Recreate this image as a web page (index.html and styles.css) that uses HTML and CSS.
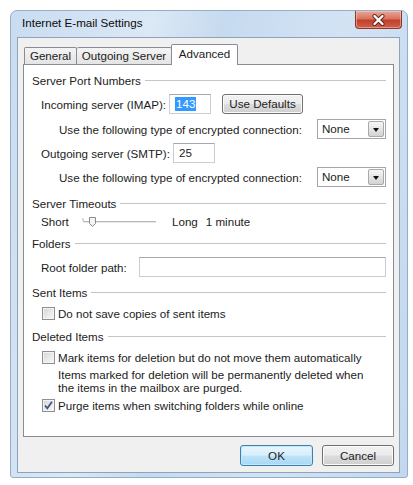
FILE: index.html
```
<!DOCTYPE html>
<html lang="en">
<head>
    <meta charset="UTF-8">
    <title>Internet E-mail Settings</title>
    <link rel="stylesheet" href="styles.css">
</head>
<body>
    <div class="window">
        <div class="titlebar">
            <span class="title">Internet E-mail Settings</span>
            <div class="close">
                <svg width="15" height="12" viewBox="0 0 15 12">
                    <path d="M3.5 2 L11.5 10 M11.5 2 L3.5 10" stroke="#5b2118" stroke-width="4" stroke-linecap="round"/>
                    <path d="M3.5 2 L11.5 10 M11.5 2 L3.5 10" stroke="#ffffff" stroke-width="2.4" stroke-linecap="round"/>
                </svg>
            </div>
        </div>

        <div class="client">
            <div class="tabs">
                <div class="tab t-general">General</div>
                <div class="tab t-outgoing">Outgoing Server</div>
                <div class="tab t-advanced active">Advanced</div>
            </div>

            <div class="panel">
                <div class="group">Server Port Numbers</div>
                <div class="row r-incoming">
                    <span class="lbl w-incoming">Incoming server (IMAP):</span>
                    <div class="field port"><span class="selected">143</span></div>
                    <div class="btn defaults">Use Defaults</div>
                </div>
                <div class="row sub r-enc1">
                    <span class="lbl w-enc">Use the following type of encrypted connection:</span>
                    <div class="combo">None<span class="drop"><span class="arrow"></span></span></div>
                </div>
                <div class="row r-outgoing">
                    <span class="lbl w-outgoing">Outgoing server (SMTP):</span>
                    <div class="field port">25</div>
                </div>
                <div class="row sub r-enc2">
                    <span class="lbl w-enc">Use the following type of encrypted connection:</span>
                    <div class="combo">None<span class="drop"><span class="arrow"></span></span></div>
                </div>

                <div class="group g-timeouts">Server Timeouts</div>
                <div class="row slim r-short">
                    <span class="lbl w-short">Short</span>
                    <svg class="slider" width="75" height="16" viewBox="0 0 75 16">
                        <path d="M1 5 V8" stroke="#b4b4b4" stroke-width="1"/>
                        <path d="M1 8.5 H74" stroke="#b9b9b9" stroke-width="1"/>
                        <path d="M1 9.5 H74" stroke="#e6e6e6" stroke-width="1"/>
                        <path d="M7.5 4.5 H13.5 V10.5 L10.5 13.5 L7.5 10.5 Z" fill="#f4f4f4" stroke="#8a8a8a" stroke-width="1"/>
                    </svg>
                    <span class="long">Long</span>
                    <span class="minute">1 minute</span>
                </div>

                <div class="group g-folders">Folders</div>
                <div class="row r-root">
                    <span class="lbl w-root">Root folder path:</span>
                    <div class="field path"></div>
                </div>

                <div class="group g-sent">Sent Items</div>
                <div class="row slim check r-sent">
                    <span class="box"></span>
                    <span>Do not save copies of sent items</span>
                </div>

                <div class="group g-deleted">Deleted Items</div>
                <div class="row slim check r-mark">
                    <span class="box"></span>
                    <span>Mark items for deletion but do not move them automatically</span>
                </div>
                <p class="note">Items marked for deletion will be permanently deleted when<br>the items in the mailbox are purged.</p>
                <div class="row slim check r-purge">
                    <span class="box">
                        <svg width="11" height="11" viewBox="0 0 11 11">
                            <path d="M2 5.5 L4.3 8.3 L9 1.8" fill="none" stroke="#3f5488" stroke-width="1.8"/>
                        </svg>
                    </span>
                    <span>Purge items when switching folders while online</span>
                </div>
            </div>

            <div class="buttons">
                <div class="btn ok">OK</div>
                <div class="btn cancel">Cancel</div>
            </div>
        </div>
    </div>
</body>
</html>
```

FILE: styles.css
```
body{
    margin: 0;
    padding: 10px 0 0 10px;
    background-color: #ffffff;
    font-family: 'Liberation Sans', Arial, sans-serif;
    font-size: 11.6px;
    color: #1c1c1c;
}

.window{
    box-sizing: border-box;
    width: 398px;
    height: 468px;
    padding: 0 7px 4px 6px;
    border: 1px solid #93aecb;
    border-radius: 7px 7px 3px 3px;
    background: linear-gradient(100deg, #c9dcf0 0%, #dbe8f6 30%, #c6daef 45%, #d3e3f4 70%, #c3d8ee 100%);
}

.titlebar{
    height: 26px;
    display: flex;
    align-items: center;
}

.title{
    padding: 0 0 3px 5px;
    font-size: 11.6px;
    color: #0b0b0b;
}

.close{
    box-sizing: border-box;
    width: 47px;
    height: 18px;
    margin: -8px -2px 0 auto;
    display: flex;
    align-items: center;
    justify-content: center;
    border: 1px solid #8b3628;
    border-top: none;
    border-radius: 0 0 4px 4px;
    background: linear-gradient(#e9a797 0%, #d9735f 45%, #c2402b 55%, #d0604b 100%);
    box-shadow: inset 0 0 0 1px rgba(255, 220, 210, 0.45);
}

.client{
    box-sizing: border-box;
    height: 436px;
    padding: 6px 5px 0 5px;
    border: 1px solid #8ea2ba;
    background-color: #f0f0f0;
}

/* tabs */
.tabs{
    display: flex;
    height: 20px;
    align-items: flex-end;
}

.tab{
    box-sizing: border-box;
    height: 17px;
    line-height: 16px;
    text-align: center;
    border: 1px solid #898c95;
    border-bottom: none;
    border-radius: 2px 2px 0 0;
    background: linear-gradient(#f4f4f4, #e4e4e4);
}

.t-general{
    width: 53px;
    margin-left: 1px;
}

.t-outgoing{
    width: 95px;
    border-left: none;
}

.tab.active{
    position: relative;
    z-index: 1;
    width: 67px;
    height: 21px;
    margin-left: -1px;
    margin-bottom: -1px;
    line-height: 18px;
    background: #ffffff;
}

.panel{
    box-sizing: border-box;
    height: 373px;
    padding: 7px 7px 0 8px;
    border: 1px solid #898c95;
    background-color: #ffffff;
}

.group{
    height: 16px;
    display: flex;
    align-items: center;
    gap: 4px;
}

.group::after{
    content: '';
    flex: 1;
    height: 1px;
    background-color: #c5c5c5;
}

.g-timeouts{ margin-top: 8px; }
.g-folders{ margin-top: 6px; }
.g-sent{ margin-top: 7px; }
.g-deleted{ margin-top: 7px; }

.row{
    display: flex;
    align-items: center;
    height: 20px;
    margin-left: 9px;
}

.row.sub{ margin-left: 27px; }
.row.slim{ height: 16px; }

.r-incoming{ margin-top: 6px; }
.r-enc1{ margin-top: 5px; }
.r-outgoing{ margin-top: 4px; }
.r-enc2{ margin-top: 4px; }
.r-short{ margin-top: 2px; }
.r-root{ margin-top: 6px; }
.r-sent{ margin-top: 5px; }
.r-mark{ margin-top: 5px; }
.r-purge{ margin-top: 3px; }

.lbl{ flex: none; }
.w-incoming{ width: 128px; }
.w-outgoing{ width: 132px; }
.w-enc{ width: 258px; }
.w-root{ width: 98px; }
.w-short{ width: 41px; }

/* inputs */
.field{
    box-sizing: border-box;
    height: 20px;
    padding-left: 5px;
    line-height: 18px;
    border: 1px solid #c9ced6;
    border-top-color: #a3a8b1;
    background-color: #ffffff;
}

.port{ width: 42px; }
.path{ width: 247px; }

.selected{
    display: inline-block;
    padding: 0 1px;
    line-height: 14px;
    color: #ffffff;
    background-color: #3399ff;
}

.combo{
    box-sizing: border-box;
    position: relative;
    width: 69px;
    height: 20px;
    padding-left: 4px;
    line-height: 18px;
    border: 1px solid #a6a6a6;
    background-color: #ffffff;
}

.drop{
    box-sizing: border-box;
    position: absolute;
    top: 1px;
    right: 1px;
    width: 16px;
    height: 16px;
    display: flex;
    align-items: center;
    justify-content: center;
    border: 1px solid #a9a9a9;
    border-radius: 2px;
    background: linear-gradient(#f6f6f6 0%, #e6e6e6 50%, #d2d2d2 100%);
}

.arrow{
    width: 0;
    height: 0;
    margin-top: 2px;
    border-left: 3.5px solid transparent;
    border-right: 3.5px solid transparent;
    border-top: 4px solid #111111;
}

/* buttons */
.btn{
    box-sizing: border-box;
    height: 21px;
    line-height: 19px;
    text-align: center;
    border: 1px solid #707070;
    border-radius: 3px;
    background: linear-gradient(#f2f2f2 0%, #ebebeb 48%, #dddddd 52%, #cfcfcf 100%);
    box-shadow: inset 0 0 0 1px #fbfbfb;
}

.defaults{
    width: 81px;
    margin-left: 11px;
    height: 20px;
    line-height: 18px;
}

.buttons{
    display: flex;
    justify-content: flex-end;
    gap: 9px;
    margin-top: 8px;
}

.ok{
    width: 73px;
    border-color: #3c7fb1;
    background: linear-gradient(#e9f5fc 0%, #d8effb 48%, #bde4f9 52%, #a8d8f3 100%);
    box-shadow: inset 0 0 0 1px #c3e8fb;
}

.cancel{ width: 72px; }

/* slider row */
.slider{ flex: none; }
.long{ margin-left: 15px; }
.minute{ margin-left: 8px; }

/* check boxes */
.row.check{ margin-left: 10px; gap: 3px; }

.box{
    box-sizing: border-box;
    width: 13px;
    height: 13px;
    display: flex;
    align-items: center;
    justify-content: center;
    border: 1px solid #8f8f8f;
    background: linear-gradient(135deg, #d2d2d2 0%, #e8e8e8 50%, #f8f8f8 100%);
    box-shadow: inset 0 0 0 1px #f3f3f3;
}

.note{
    margin: 3px 0 0 26px;
    line-height: 13px;
}
```
